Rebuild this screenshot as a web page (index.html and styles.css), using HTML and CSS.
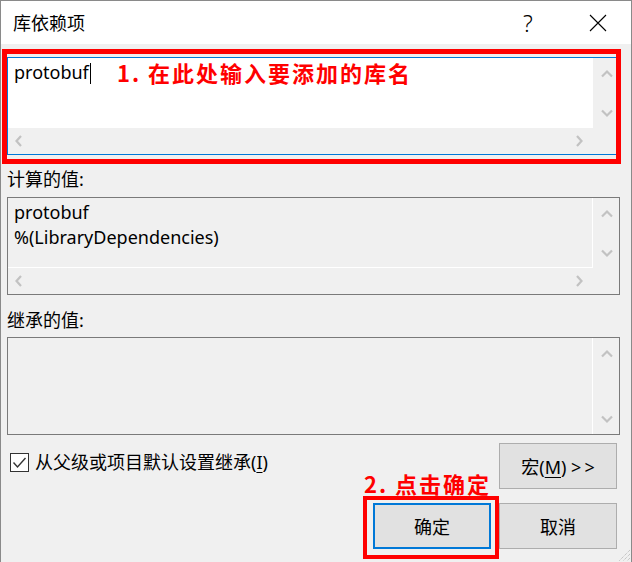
FILE: index.html
```html
<!DOCTYPE html>
<html lang="zh-CN">
<head>
<meta charset="utf-8">
<title>库依赖项</title>
<link rel="stylesheet" href="styles.css">
</head>
<body>
<div class="window">
  <div class="titlebar">
    <span class="title">库依赖项</span>
    <span class="help">?</span>
    <span class="close"><svg width="18" height="18" viewBox="0 0 18 18"><path d="M1 1 L17 17 M17 1 L1 17" stroke="#000" stroke-width="1.1" fill="none"/></svg></span>
  </div>
  <div class="body">
    <div class="field">
      <div class="box box-active">
        <div class="content">protobuf<span class="caret"></span></div>
        <div class="vscroll">
          <svg class="chev" width="12" height="9" viewBox="0 0 12 9"><polyline points="1,7.5 6,2.5 11,7.5"/></svg>
          <svg class="chev" width="12" height="9" viewBox="0 0 12 9"><polyline points="1,1.5 6,6.5 11,1.5"/></svg>
        </div>
        <div class="hscroll">
          <svg class="chev" width="9" height="12" viewBox="0 0 9 12"><polyline points="7,1 2.5,6 7,11"/></svg>
          <svg class="chev" width="9" height="12" viewBox="0 0 9 12"><polyline points="2,1 6.5,6 2,11"/></svg>
        </div>
        <div class="corner"></div>
      </div>
      <div class="mark mark-field"></div>
      <div class="note note-field">1. 在此处输入要添加的库名</div>
    </div>

    <div class="label">计算的值:</div>
    <div class="box box-disabled">
      <div class="content">protobuf<br>%(LibraryDependencies)</div>
      <div class="vscroll">
        <svg class="chev" width="12" height="9" viewBox="0 0 12 9"><polyline points="1,7.5 6,2.5 11,7.5"/></svg>
        <svg class="chev" width="12" height="9" viewBox="0 0 12 9"><polyline points="1,1.5 6,6.5 11,1.5"/></svg>
      </div>
      <div class="hscroll">
        <svg class="chev" width="9" height="12" viewBox="0 0 9 12"><polyline points="7,1 2.5,6 7,11"/></svg>
        <svg class="chev" width="9" height="12" viewBox="0 0 9 12"><polyline points="2,1 6.5,6 2,11"/></svg>
      </div>
      <div class="corner"></div>
    </div>

    <div class="label label-2">继承的值:</div>
    <div class="box box-disabled box-noh">
      <div class="content"></div>
      <div class="vscroll">
        <svg class="chev" width="12" height="9" viewBox="0 0 12 9"><polyline points="1,7.5 6,2.5 11,7.5"/></svg>
        <svg class="chev" width="12" height="9" viewBox="0 0 12 9"><polyline points="1,1.5 6,6.5 11,1.5"/></svg>
      </div>
    </div>

    <div class="footer">
      <div class="check">
        <span class="checkbox"><svg width="19" height="19" viewBox="0 0 19 19"><polyline points="3.5,9.5 7.5,14 15.5,5" fill="none" stroke="#333" stroke-width="1.4"/></svg></span>
        <span class="check-text">从父级或项目默认设置继承(<u>I</u>)</span>
      </div>
      <div class="buttons">
        <div class="btn-spacer"></div>
        <div class="btn">宏(<u>M</u>)&nbsp;<span class="gt">&gt;&gt;</span></div>
        <div class="btn-wrap">
          <div class="btn btn-default">确定</div>
          <div class="mark mark-btn"></div>
          <div class="note note-btn">2. 点击确定</div>
        </div>
        <div class="btn">取消</div>
      </div>
    </div>
  </div>
  <svg class="grip" width="15" height="15" viewBox="0 0 15 15">
    <path d="M14 3 L3 14 M14 7 L7 14 M14 11 L11 14" stroke="#b4b4b4" stroke-width="1" fill="none" stroke-dasharray="1 1"/>
  </svg>
</div>
</body>
</html>
```

FILE: styles.css
```css
* { box-sizing: border-box; }

html, body {
  margin: 0;
  padding: 0;
  background: #f0f0f0;
}

body {
  font-family: "Noto Sans", "Noto Sans CJK SC", sans-serif;
  font-size: 18px;
  color: #000;
}

.window {
  position: relative;
  width: 632px;
  height: 562px;
  border: 1px solid #8a8a8a;
  border-bottom: none;
  background: #f0f0f0;
  overflow: hidden;
}

.titlebar {
  display: flex;
  align-items: center;
  height: 43px;
  background: #fff;
  padding-left: 12px;
}

.title {
  flex: 1;
  font-size: 18px;
  line-height: 24px;
  padding-top: 1px;
}

.help {
  width: 20px;
  text-align: center;
  font-size: 23px;
  font-weight: 300;
  line-height: 28px;
  margin-right: 51px;
  padding-top: 1px;
}

.close {
  display: flex;
  margin-right: 24px;
}

.body {
  padding: 13px 11px 0 6px;
}

.field {
  position: relative;
}

.box {
  display: grid;
  grid-template-columns: 1fr 26px;
  grid-template-rows: 70px 26px;
  width: 613px;
  border: 1px solid #7a7a7a;
  background: #f0f0f0;
}

.box-noh {
  grid-template-rows: 96px;
}

.box-active {
  border-color: #0078d7;
}

.content {
  padding: 2px 6px 0;
  line-height: 25px;
  white-space: nowrap;
  overflow: hidden;
}

.box-active .content {
  background: #fff;
}

.box-disabled .content {
  border-right: 1px solid #fff;
  border-bottom: 1px solid #fff;
}

.box-noh .content {
  border-bottom: none;
}

.caret {
  display: inline-block;
  width: 1px;
  height: 21px;
  background: #000;
  vertical-align: -5px;
  margin-left: 1px;
}

.vscroll {
  display: flex;
  flex-direction: column;
  justify-content: space-between;
  align-items: center;
  padding: 11px 0 10px 1px;
}

.hscroll {
  display: flex;
  justify-content: space-between;
  align-items: center;
  padding: 0 9px 0 6px;
}

.chev polyline {
  fill: none;
  stroke: #c2c2c2;
  stroke-width: 2.2;
}

.label {
  margin: 12px 0 6px 0;
  line-height: 24px;
}

.label-2 {
  margin: 13px 0 5px 0;
}

.footer {
  display: flex;
  justify-content: space-between;
  align-items: flex-start;
  padding-top: 8px;
}

.check {
  display: flex;
  align-items: center;
  margin: 7px 0 0 3px;
}

.checkbox {
  display: flex;
  width: 19px;
  height: 19px;
  border: 1px solid #333;
  background: #fff;
}

.checkbox svg {
  margin: -1px;
}

.check-text {
  margin-left: 6px;
  line-height: 24px;
}

.check-text u, .btn u {
  text-decoration-thickness: 1px;
  text-underline-offset: 3px;
}

.gt {
  letter-spacing: 3px;
  margin-right: -3px;
}

.buttons {
  display: grid;
  grid-template-columns: 118px 118px;
  grid-template-rows: 46px 46px;
  column-gap: 8px;
  row-gap: 14px;
  margin-right: 3px;
}

.btn {
  display: flex;
  align-items: center;
  justify-content: center;
  height: 46px;
  background: #e1e1e1;
  border: 1px solid #adadad;
  line-height: 24px;
  padding-top: 1px;
}

.btn-wrap {
  position: relative;
}

.btn-default {
  border: 2px solid #0078d7;
}

.mark {
  position: absolute;
  border: 5px solid #ff0000;
  pointer-events: none;
}

.mark-field {
  left: -5px;
  top: -8px;
  width: 619px;
  height: 115px;
}

.mark-btn {
  border-width: 4px;
  left: -10px;
  top: -7px;
  width: 136px;
  height: 63px;
}

.note {
  position: absolute;
  color: #ff0000;
  font-family: "Noto Sans CJK SC", "Noto Sans", sans-serif;
  font-weight: 700;
  font-size: 22px;
  line-height: 26px;
  letter-spacing: 2px;
  white-space: nowrap;
}

.note-field {
  left: 110px;
  top: 2px;
}

.note-btn {
  left: -9px;
  top: -33px;
}

.grip {
  position: absolute;
  right: 0;
  bottom: 0;
}
```
